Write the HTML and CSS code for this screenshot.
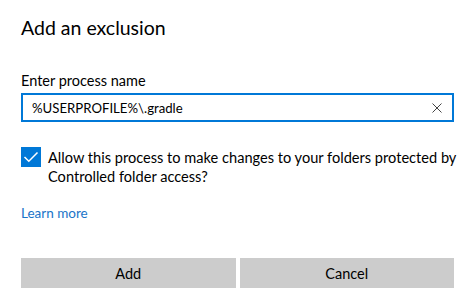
FILE: index.html
```html
<!DOCTYPE html>
<html>
<head>
<meta name="viewport" content="width=device-width, initial-scale=1.0">
<title>Add an exclusion</title>
<link rel="stylesheet" href="styles.css">
</head>
<body>

<div class="dialog">
  <h2 class="title">Add an exclusion</h2>

  <label class="field-label" for="process">Enter process name</label>
  <div class="textbox">
    <input class="text-input" type="text" id="process" name="process" value="%USERPROFILE%\.gradle">
    <span class="clear">
      <svg width="10" height="10" viewBox="0 0 10 10"><path d="M0.5 0.5 L9.5 9.5 M9.5 0.5 L0.5 9.5" stroke="#444" stroke-width="1" fill="none"/></svg>
    </span>
  </div>

  <div class="check-row">
    <span class="checkbox">
      <svg width="20" height="20" viewBox="0 0 20 20"><path d="M3.5 10 L7.8 14.3 L16.5 5.5" stroke="#fff" stroke-width="1.5" fill="none"/></svg>
    </span>
    <span class="check-text">Allow this process to make changes to your folders protected by Controlled folder access?</span>
  </div>

  <a class="link" href="#">Learn more</a>

  <div class="buttons">
    <button class="button" type="button">Add</button>
    <button class="button" type="button">Cancel</button>
  </div>
</div>

</body>
</html>
```

FILE: styles.css
```css
body {
  margin: 0;
  background: #fff;
  font-family: Lato, "Noto Sans", Arial, sans-serif;
  color: #000;
}

.dialog {
  padding: 14px 20px 0 21px;
  display: flex;
  flex-direction: column;
  align-items: flex-start;
}

.title {
  font-size: 19.5px;
  font-weight: normal;
  margin: 0;
  line-height: 28px;
}

.field-label {
  font-size: 14.5px;
  line-height: 20px;
  margin-top: 29px;
}

.textbox {
  margin-top: 2px;
  width: 433px;
  height: 29px;
  box-sizing: border-box;
  border: 2px solid #0078d7;
  padding-right: 10px;
  display: flex;
  align-items: center;
}

.text-input {
  border: none;
  outline: none;
  flex: 1;
  min-width: 0;
  height: 25px;
  box-sizing: border-box;
  font-family: inherit;
  font-size: 13.2px;
  padding: 0 0 0 9px;
  margin: 0;
  color: #000;
  background: transparent;
}

.clear {
  width: 10px;
  height: 10px;
  display: flex;
}

.check-row {
  margin-top: 25px;
  display: flex;
  align-items: flex-start;
}

.checkbox {
  width: 20px;
  height: 20px;
  background: #0078d7;
  flex: none;
  display: flex;
}

.check-text {
  font-size: 14.6px;
  line-height: 19px;
  margin-left: 7px;
  margin-top: 1px;
  width: 412px;
}

.link {
  margin-top: 18px;
  font-size: 13.5px;
  line-height: 18px;
  color: #1a74c8;
  text-decoration: none;
}

.buttons {
  margin-top: 36px;
  display: flex;
  gap: 4px;
  width: 433px;
}

.button {
  flex: 1;
  height: 30px;
  border: none;
  background: #cccccc;
  font-family: inherit;
  font-size: 14.5px;
  color: #000;
  padding: 0;
}
```
